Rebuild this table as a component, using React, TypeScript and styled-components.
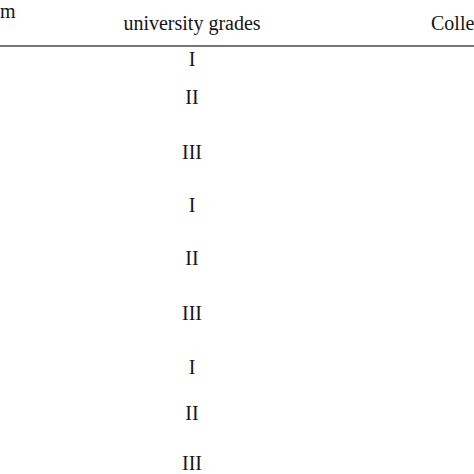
import styled, { createGlobalStyle } from 'styled-components';

const rows = [
    { grade: 'I', height: 22 },
    { grade: 'II', height: 56 },
    { grade: 'III', height: 54 },
    { grade: 'I', height: 52 },
    { grade: 'II', height: 54 },
    { grade: 'III', height: 56 },
    { grade: 'I', height: 52 },
    { grade: 'II', height: 40 },
    { grade: 'III', height: 60 },
];

export default function App() {
    return (
        <>
            <GlobalStyle />
            <Page>
                <HeaderRow>
                    <HeaderCell $top={-1}>m</HeaderCell>
                    <HeaderCell $top={11} $align="center">
                        university grades
                    </HeaderCell>
                    <HeaderCell $top={11} $indent={107}>
                        Colle
                    </HeaderCell>
                </HeaderRow>
                {rows.map((row, i) => (
                    <BodyRow key={i} $height={row.height}>
                        <Cell />
                        <GradeCell>{row.grade}</GradeCell>
                        <Cell />
                    </BodyRow>
                ))}
            </Page>
        </>
    );
}

const GlobalStyle = createGlobalStyle`
    html, body {
        margin: 0;
        padding: 0;
        background: #ffffff;
    }
`;

const Page = styled.div`
    width: 474px;
    height: 474px;
    overflow: hidden;
    font-family: "Liberation Serif", "Times New Roman", serif;
    font-size: 20px;
    line-height: 24px;
    color: #151515;
`;

const HeaderRow = styled.div`
    display: grid;
    grid-template-columns: 60px 264px 1fr;
    height: 45px;
    border-bottom: 2px solid #767676;
`;

const HeaderCell = styled.div<{ $top: number; $align?: string; $indent?: number }>`
    padding-top: ${(props) => Math.max(props.$top, 0)}px;
    margin-top: ${(props) => Math.min(props.$top, 0)}px;
    padding-left: ${(props) => props.$indent || 0}px;
    text-align: ${(props) => props.$align || 'left'};
    white-space: nowrap;
`;

const BodyRow = styled.div<{ $height: number }>`
    display: grid;
    grid-template-columns: 60px 264px 1fr;
    height: ${(props) => props.$height}px;
`;

const Cell = styled.div``;

const GradeCell = styled.div`
    display: flex;
    align-items: center;
    justify-content: center;
`;
